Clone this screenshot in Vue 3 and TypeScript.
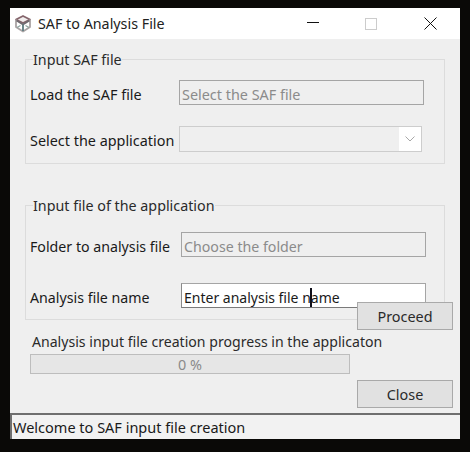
<script setup lang="ts">
const progress: number = 0
</script>

<template>
  <div class="desktop">
    <div class="window">
      <header class="titlebar">
        <svg class="app-icon" width="20" height="20" viewBox="0 0 20 20" fill="none">
          <path d="M10 2 17 5.5 10 9 3 5.5Z" fill="#f1eeee" stroke="#85656c" stroke-width="1.8" stroke-linejoin="round" />
          <path d="M3 5.5V13L10 17.5 17 13V5.5" stroke="#a9a3a4" stroke-width="1.8" stroke-linejoin="round" />
          <path d="M3.5 6.5 10 10.5 16.5 6.5" stroke="#6f6a70" stroke-width="1.6" />
          <path d="M10 10.5V17" stroke="#5d7c80" stroke-width="1.8" />
          <path d="M4 13.5 7.5 11.5M16 13.5 12.5 11.5" stroke="#8fa5a0" stroke-width="1.4" />
        </svg>
        <span class="title">SAF to Analysis File</span>
        <div class="controls">
          <svg class="ctl" width="12" height="12" viewBox="0 0 12 12"><path d="M0 4.5H12" stroke="#111" stroke-width="1" /></svg>
          <svg class="ctl" width="12" height="12" viewBox="0 0 12 12"><rect x=".5" y=".5" width="11" height="11" fill="none" stroke="#ccc" /></svg>
          <svg class="ctl ctl-close" width="13" height="13" viewBox="0 0 13 13"><path d="M.5.5 12.5 12.5M12.5.5.5 12.5" stroke="#111" stroke-width="1" /></svg>
        </div>
      </header>

      <main class="content">
        <fieldset class="group group-saf">
          <legend>Input SAF file</legend>
          <div class="row row-load">
            <label class="field-label">Load the SAF file</label>
            <div class="input disabled input-saf">Select the SAF file</div>
          </div>
          <div class="row row-app">
            <label class="field-label">Select the application</label>
            <div class="combo">
              <div class="combo-value"></div>
              <div class="combo-arrow">
                <svg width="10" height="6" viewBox="0 0 10 6" fill="none"><path d="M.5.5 5 5 9.5.5" stroke="#a8a8a8" /></svg>
              </div>
            </div>
          </div>
        </fieldset>

        <fieldset class="group group-file">
          <legend>Input file of the application</legend>
          <div class="row row-folder">
            <label class="field-label">Folder to analysis file</label>
            <div class="input disabled input-file">Choose the folder</div>
          </div>
          <div class="row row-name">
            <label class="field-label">Analysis file name</label>
            <div class="input active input-file">Enter analysis file n<span class="caret"></span>ame</div>
          </div>
          <button class="btn btn-proceed" type="button">Proceed</button>
        </fieldset>

        <div class="progress-label">Analysis input file creation progress in the applicaton</div>
        <div class="progress-bar">{{ progress }} %</div>
        <div class="actions">
          <button class="btn" type="button">Close</button>
        </div>
      </main>

      <footer class="statusbar">Welcome to SAF input file creation</footer>
    </div>
  </div>
</template>

<style>
html, body { margin: 0; background: #0a0907; }
</style>

<style scoped>
.desktop {
  width: 470px;
  height: 452px;
  box-sizing: border-box;
  padding: 8px 10px 13px;
  background: #0a0907;
  font-family: "Noto Sans", "Open Sans", sans-serif;
  font-size: 14.4px;
  color: #1a1a1a;
  overflow: hidden;
}
.window {
  width: 450px;
  height: 431px;
  background: #efefef;
  display: flex;
  flex-direction: column;
}
.titlebar {
  height: 31px;
  flex: none;
  background: #fff;
  display: flex;
  align-items: center;
  padding: 0 23px 0 3px;
}
.app-icon { flex: none; }
.title { margin-left: 5px; font-size: 14.3px; color: #222; }
.controls { margin-left: auto; display: flex; align-items: center; }
.ctl { display: block; }
.ctl + .ctl { margin-left: 46px; }
.ctl + .ctl-close { margin-left: 47px; }
.content {
  flex: 1;
  min-height: 0;
  display: flex;
  flex-direction: column;
  padding: 0 7px 0 15px;
}
.group {
  margin: 0;
  width: 420px;
  box-sizing: border-box;
  border: 1px solid #dcdcdc;
  padding: 0 0 0 4px;
  position: relative;
  min-width: 0;
}
.group legend {
  margin-left: 3px;
  padding: 1px 0 0;
  font-size: 14.3px;
  line-height: 20px;
  color: #2a2a2a;
}
.group-saf { margin-top: 10px; height: 115px; }
.group-file { margin-top: 31px; height: 125px; }
.row { display: flex; align-items: center; }
.row-load { margin-top: 10px; }
.row-app { margin-top: 21px; }
.row-folder { margin-top: 16px; }
.row-name { margin-top: 26px; }
.field-label { white-space: nowrap; width: 149px; flex: none; padding-top: 3px; }
.row-folder .field-label, .row-name .field-label { width: 151px; font-size: 14.2px; }
.input {
  height: 25px;
  box-sizing: border-box;
  border: 1px solid #a5a5a5;
  padding-left: 2px;
  line-height: 27px;
  white-space: nowrap;
  flex: none;
}
.input-saf { width: 245px; }
.input-file { width: 245px; font-size: 14.2px; }
.disabled { color: #8b8b8b; background: #efefef; }
.input-file.active {
  background: #fff;
  color: #1a1a1a;
  font-size: 14px;
  border-color: #a5a5a5 #a5a5a5 #7a7a7a #8a8a8a;
  position: relative;
}
.caret {
  display: inline-block;
  width: 2px;
  height: 19px;
  margin: 0 -1px;
  vertical-align: -4px;
  background: #10101a;
}
.combo {
  width: 243px;
  height: 26px;
  box-sizing: border-box;
  border: 1px solid #cdcdcd;
  display: flex;
  flex: none;
}
.combo-value { flex: 1; background: #efefef; }
.combo-arrow {
  width: 22px;
  background: #fff;
  display: flex;
  align-items: center;
  justify-content: center;
}
.btn {
  width: 96px;
  height: 28px;
  box-sizing: border-box;
  border: 1px solid #a9a9a9;
  background: #e1e1e1;
  font: inherit;
  color: #2a2a2a;
  padding: 0;
}
.btn-proceed {
  position: absolute;
  left: 331px;
  top: 86px;
}
.progress-label {
  margin: 12px 0 0 7px;
  line-height: 20px;
  font-size: 14.1px;
  color: #2a2a2a;
}
.progress-bar {
  margin: 2px 0 0 5px;
  width: 320px;
  height: 20px;
  box-sizing: border-box;
  border: 1px solid #bdbdbd;
  background: #e6e6e6;
  color: #8a8a8a;
  text-align: center;
  line-height: 19px;
}
.actions {
  margin: 6px 0 0 332px;
}
.statusbar {
  height: 26px;
  flex: none;
  box-sizing: border-box;
  border-top: 2px solid #6f6f6f;
  border-left: 2px solid #6f6f6f;
  padding-left: 1px;
  line-height: 24px;
  background: #f2f2f2;
  color: #1a1a1a;
  white-space: nowrap;
  font-size: 14.5px;
}
</style>
